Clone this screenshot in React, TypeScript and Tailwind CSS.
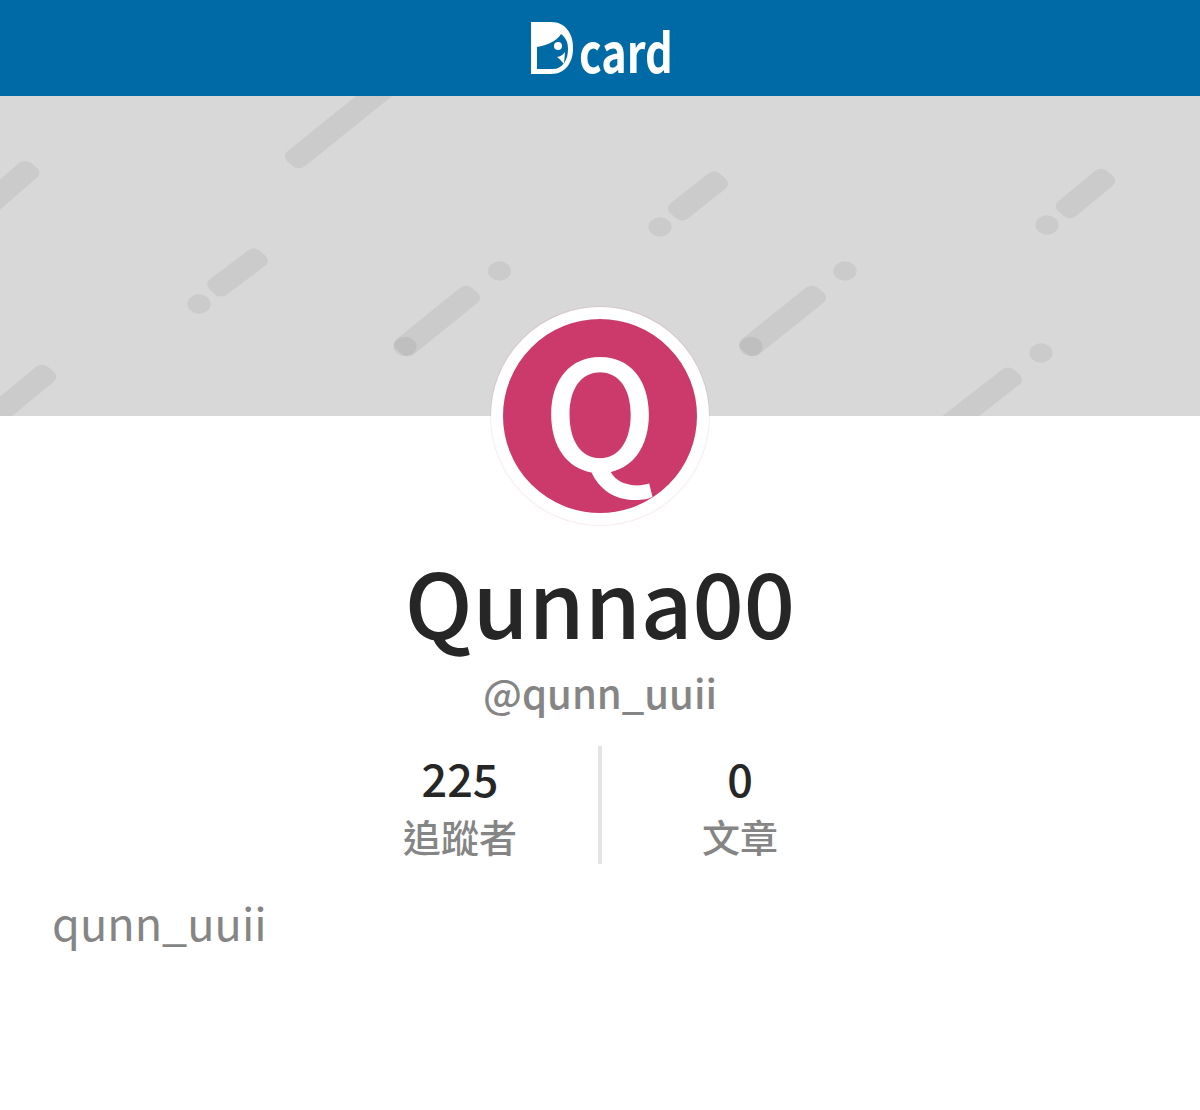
const bars: [number, number, number, number][] = [
  [-20, 212, 33, 166],
  [291, 163, 420, 59],
  [213, 291, 262, 254],
  [400, 351, 474, 291],
  [-20, 428, 50, 370],
  [674, 215, 722, 177],
  [745, 351, 820, 291],
  [1062, 213, 1109, 174],
  [930, 440, 1016, 373],
];
const dots: [number, number][] = [
  [199, 304],
  [499.5, 271],
  [405, 346.5],
  [660, 227],
  [845, 271],
  [751, 346.5],
  [1047, 225],
  [1041, 353],
];

function Pattern() {
  return (
    <svg className="absolute inset-0 h-full w-full" viewBox="0 96 1000 320" preserveAspectRatio="none">
      {bars.map(([x1, y1, x2, y2], i) => {
        const a = x1 / 1.2;
        const c = x2 / 1.2;
        const len = Math.hypot(c - a, y2 - y1);
        const deg = (Math.atan2(y2 - y1, c - a) * 180) / Math.PI;
        return (
          <rect
            key={i}
            x={-1}
            y={-10.500}
            width={len + 2}
            height={21}
            rx={7}
            fill="#000"
            fillOpacity={0.06}
            transform={`translate(${a} ${y1}) rotate(${deg})`}
          />
        );
      })}
      {dots.map(([x, y], i) => (
        <circle key={i} cx={x / 1.2} cy={y} r={9.7} fill="#000" fillOpacity={0.06} />
      ))}
    </svg>
  );
}

function LogoMark() {
  return (
    <svg width="42" height="52" viewBox="0 0 42 52" className="shrink-0">
      <path fill="#fff" d="M0 0H20C34 0 42 11 42 26C42 41 34 52 20 52H0Z" />
      <path fill="#006aa6" d="M6 25C16 23.500 26 19 30 12C35 16 37 20 37 27C37 39 31 47 22 47H6Z" />
      <circle cx="27" cy="24" r="4" fill="#fff" />
      <path fill="#fff" d="M26 35C29 34.500 32 33 34 30L33 42C31 39.500 28.500 37 26 35Z" />
    </svg>
  );
}

export default function App() {
  return (
    <div className="min-h-[1110px] bg-white font-['Noto_Sans_CJK_TC','Noto_Sans',sans-serif]">
      <header className="flex h-24 items-center justify-center bg-[#006aa6]">
        <div className="flex h-[52px] w-[139px] items-end">
          <LogoMark />
          <span className="-mb-[2px] ml-[6px] w-[91px] origin-bottom-left scale-x-[0.8] text-[54px] leading-[52px] font-bold whitespace-nowrap text-white">
            card
          </span>
        </div>
      </header>
      <div className="relative h-80 overflow-hidden bg-[#d8d8d8]">
        <Pattern />
      </div>
      <div className="relative -mt-[109px] flex flex-col items-center">
        <div className="flex h-[218px] w-[218px] items-center justify-center rounded-full border-[12px] border-white bg-[#cc3a6b] shadow-[0_0_0_1px_rgba(204,58,107,0.1)]">
          <span className="-mt-[22px] text-[152px] leading-none font-medium text-white">Q</span>
        </div>
        <h1 className="mt-[15px] text-[90px] leading-[120px] font-medium text-[#262626]">Qunna00</h1>
        <p className="mt-[4px] text-[40px] leading-[56px] font-medium text-[#858585]">@qunn_uuii</p>
        <div className="mt-[26px] flex h-[118px] w-full justify-center">
          <div className="flex w-[276px] flex-col items-center">
            <span className="pt-[1px] text-[45px] leading-[62px] font-medium text-[#262626]">225</span>
            <span className="pt-[1px] text-[38px] leading-[52px] font-medium text-[#858585]">追蹤者</span>
          </div>
          <div className="w-1 bg-[#e4e4e4]" />
          <div className="flex w-[276px] flex-col items-center">
            <span className="pt-[1px] text-[45px] leading-[62px] font-medium text-[#262626]">0</span>
            <span className="pt-[1px] text-[38px] leading-[52px] font-medium text-[#858585]">文章</span>
          </div>
        </div>
        <p className="mt-[22px] w-full px-[52px] text-[45px] leading-[72px] text-[#858585]">qunn_uuii</p>
      </div>
    </div>
  );
}
